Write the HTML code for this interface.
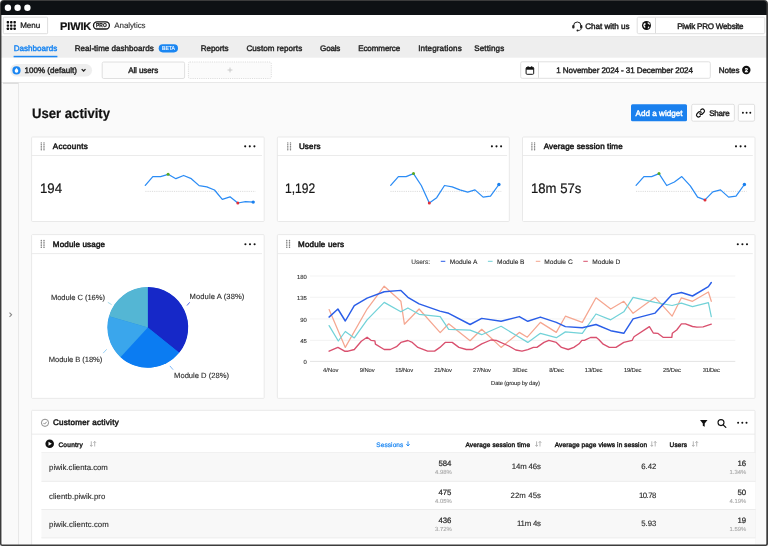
<!DOCTYPE html>
<html lang="en">
<head>
<meta charset="utf-8">
<title>Piwik PRO Analytics - User activity</title>
<style>
html,body{margin:0;padding:0;background:#fff;overflow:hidden;}
body{width:768px;height:546px;position:relative;overflow:hidden;font-family:"Liberation Sans",sans-serif;-webkit-font-smoothing:antialiased;}
.b{position:absolute;display:block;margin:0;padding:0;}
.t{position:absolute;display:block;margin:0;padding:0;white-space:pre;font-weight:400;line-height:20px;text-rendering:geometricPrecision;font-family:"Liberation Sans",sans-serif;}
header,nav,section,aside,main,article{display:contents;}
svg{overflow:visible;}
</style>
</head>
<body>
<div class="b" id="app" style="left:0;top:0;width:768px;height:546px;background:#fafafa;will-change:transform;overflow:hidden;">
<header>
<svg class="b " style="left:-1px;top:13px;" width="770" height="24" viewBox="-1 13 770 24"><rect x="0.00" y="14.50" width="768.00" height="21.50" rx="0.00" fill="#fff"/></svg>
<svg class="b " style="left:2px;top:16px;" width="47" height="19" viewBox="2 16 47 19"><rect x="3.30" y="17.20" width="44.30" height="16.50" rx="0.80" fill="#fff" stroke="#dadada" stroke-width="0.9"/></svg>
<svg class="b" style="left:0px;top:14px;" width="51" height="23" viewBox="0.000 14.000 51 23"><rect x="6.70" y="21.10" width="2.4" height="2.4" rx="0.7" fill="#111"/><rect x="10.05" y="21.10" width="2.4" height="2.4" rx="0.7" fill="#111"/><rect x="13.45" y="21.10" width="2.4" height="2.4" rx="0.7" fill="#111"/><rect x="6.70" y="24.40" width="2.4" height="2.4" rx="0.7" fill="#111"/><rect x="10.05" y="24.40" width="2.4" height="2.4" rx="0.7" fill="#111"/><rect x="13.45" y="24.40" width="2.4" height="2.4" rx="0.7" fill="#111"/><rect x="6.70" y="27.60" width="2.4" height="2.4" rx="0.7" fill="#111"/><rect x="10.05" y="27.60" width="2.4" height="2.4" rx="0.7" fill="#111"/><rect x="13.45" y="27.60" width="2.4" height="2.4" rx="0.7" fill="#111"/></svg>
<span class="t" style="left:20.20px;top:16px;font-size:8.05px;color:#111;-webkit-text-stroke:0.22px currentColor;letter-spacing:-0.046px;">Menu</span>
<span class="t" style="left:60.10px;top:17px;font-size:11px;color:#111;font-weight:700;-webkit-text-stroke:0.2px currentColor;letter-spacing:-0.144px;">PIWIK</span>
<svg class="b" style="left:92px;top:20px;" width="21" height="12" viewBox="0.000 0.000 21 12"><rect x="1.5" y="1.9" width="15.9" height="7.1" rx="3.55" fill="#fff" stroke="#161616" stroke-width="1.3"/><text x="9.45" y="7.25" font-family="Liberation Sans, sans-serif" font-weight="700" font-size="4.9" text-anchor="middle" fill="#161616" stroke="#161616" stroke-width="0.25" letter-spacing="0.15">PRO</text></svg>
<span class="t" style="left:114.30px;top:16px;font-size:8px;color:#333;-webkit-text-stroke:0.12px currentColor;letter-spacing:-0.089px;">Analytics</span>
<svg class="b" style="left:571px;top:20px;" width="14" height="14" viewBox="-0.300 -0.200 14 14"><path d="M2.300 6.300V5.500a3.700 3.700 0 0 1 7.400 0v.8" fill="none" stroke="#222" stroke-width="1"/><rect x="0.9" y="4.900" width="2.300" height="3.500" rx="1" fill="#222"/><rect x="8.800" y="4.900" width="2.300" height="3.500" rx="1" fill="#222"/><path d="M9.900 8c0 1.600-1.200 2.300-3 2.300" fill="none" stroke="#222" stroke-width="0.9"/><circle cx="6.200" cy="10.200" r="1" fill="#222"/></svg>
<span class="t" style="left:585.20px;top:17px;font-size:8.05px;color:#222;-webkit-text-stroke:0.42px currentColor;letter-spacing:0.010px;">Chat with us</span>
<svg class="b " style="left:636px;top:16px;" width="130" height="19" viewBox="636 16 130 19"><rect x="637.20" y="17.20" width="127.60" height="16.50" rx="1.50" fill="#fff" stroke="#dcdcdc" stroke-width="0.9"/></svg>
<svg class="b " style="left:654px;top:16px;" width="3" height="19" viewBox="654 16 3 19"><rect x="655.00" y="17.70" width="1.00" height="15.50" rx="0.00" fill="#dcdcdc"/></svg>
<svg class="b" style="left:641px;top:20px;" width="12" height="12" viewBox="-0.300 -0.300 12 12"><circle cx="5.200" cy="5.200" r="4.500" fill="#111"/><path d="M3.400 2.600c.8.100 1.300.7 1.100 1.300-.2.600-1.100.5-1.300 1.100-.1.600.7.800.9 1.400.1.500-.1.900-.4 1.200-1-.5-1.700-1.500-1.700-2.600 0-.9.500-1.800 1.400-2.400zM6.600 1.900c1.100.3 2 1.200 2.200 2.400-.4.200-.8.100-1.100-.2-.2-.5-.8-.4-1.100-.7-.4-.4-.3-1.100 0-1.500zM7 6.200c.5-.1 1 .2 1.200.6-.3.700-.9 1.300-1.600 1.600-.2-.4-.2-.9 0-1.300.1-.4.100-.8.400-.9z" fill="#fff"/></svg>
<span class="t" style="left:677.20px;top:17px;font-size:8.05px;color:#222;-webkit-text-stroke:0.42px currentColor;letter-spacing:-0.202px;">Piwik PRO Website</span>
</header>
<nav>
<svg class="b " style="left:-1px;top:35px;" width="770" height="24" viewBox="-1 35 770 24"><rect x="0.00" y="36.00" width="768.00" height="21.80" rx="0.00" fill="#eeeeee"/></svg>
<svg class="b " style="left:-1px;top:35px;" width="770" height="3" viewBox="-1 35 770 3"><rect x="0.00" y="36.00" width="768.00" height="0.60" rx="0.00" fill="#e6e6e6"/></svg>
<span class="t" style="left:13.80px;top:39px;font-size:8.05px;color:#1a86f2;-webkit-text-stroke:0.42px currentColor;">Dashboards</span>
<svg class="b " style="left:12px;top:54px;" width="47" height="5" viewBox="12 54 47 5"><rect x="13.60" y="55.80" width="43.80" height="1.60" rx="0.00" fill="#1a86f2"/></svg>
<span class="t" style="left:74.80px;top:39px;font-size:8.05px;color:#262626;-webkit-text-stroke:0.42px currentColor;letter-spacing:0.013px;">Real-time dashboards</span>
<svg class="b " style="left:157px;top:43px;" width="22" height="11" viewBox="157 43 22 11"><rect x="158.70" y="44.30" width="19.30" height="8.10" rx="4.10" fill="#1a86f2"/></svg>
<span class="t" style="left:162.00px;top:39px;font-size:5.8px;color:#fff;-webkit-text-stroke:0.12px currentColor;transform:scaleX(0.8832);transform-origin:0 0;">BETA</span>
<span class="t" style="left:200.80px;top:39px;font-size:8.05px;color:#262626;-webkit-text-stroke:0.42px currentColor;letter-spacing:-0.081px;">Reports</span>
<span class="t" style="left:246.40px;top:39px;font-size:8.05px;color:#262626;-webkit-text-stroke:0.42px currentColor;letter-spacing:0.059px;">Custom reports</span>
<span class="t" style="left:320.10px;top:39px;font-size:8.05px;color:#262626;-webkit-text-stroke:0.42px currentColor;letter-spacing:-0.207px;">Goals</span>
<span class="t" style="left:358.20px;top:39px;font-size:8.05px;color:#262626;-webkit-text-stroke:0.42px currentColor;letter-spacing:-0.106px;">Ecommerce</span>
<span class="t" style="left:418.20px;top:39px;font-size:8.05px;color:#262626;-webkit-text-stroke:0.42px currentColor;letter-spacing:0.130px;">Integrations</span>
<span class="t" style="left:474.30px;top:39px;font-size:8.05px;color:#262626;-webkit-text-stroke:0.42px currentColor;letter-spacing:0.116px;">Settings</span>
</nav>
<section>
<svg class="b " style="left:-1px;top:56px;" width="770" height="27" viewBox="-1 56 770 27"><rect x="0.00" y="57.80" width="768.00" height="24.20" rx="0.00" fill="#fff"/></svg>
<svg class="b " style="left:-1px;top:81px;" width="770" height="3" viewBox="-1 81 770 3"><rect x="0.00" y="82.00" width="768.00" height="0.80" rx="0.00" fill="#e4e4e4"/></svg>
<svg class="b " style="left:9px;top:62px;" width="84" height="16" viewBox="9 62 84 16"><rect x="10.30" y="63.90" width="81.70" height="12.60" rx="6.30" fill="#eeeeee"/></svg>
<svg class="b" style="left:12px;top:66px;" width="10" height="10" viewBox="0.000 0.000 10 10"><circle cx="4.5" cy="4.4" r="4.1" fill="#1a86f2"/><path d="M4.5 1.9c.9 1.100 1.800 2 1.800 3a1.800 1.800 0 0 1-3.600 0c0-1 .9-1.900 1.800-3z" fill="#fff"/></svg>
<span class="t" style="left:24.50px;top:61px;font-size:8.05px;color:#262626;-webkit-text-stroke:0.42px currentColor;letter-spacing:0.011px;">100% (default)</span>
<svg class="b" style="left:80px;top:67px;" width="9" height="8" viewBox="0.000 0.000 9 8"><path d="M1.700 2.100l1.900 1.900 1.900-1.900" fill="none" stroke="#222" stroke-width="1.300"/></svg>
<svg class="b " style="left:101px;top:61px;" width="85" height="19" viewBox="101 61 85 19"><rect x="102.20" y="62.00" width="82.40" height="16.50" rx="1.50" fill="#fcfcfc" stroke="#dcdcdc" stroke-width="0.9"/></svg>
<span class="t" style="left:128.20px;top:61px;font-size:8.05px;color:#262626;-webkit-text-stroke:0.42px currentColor;letter-spacing:-0.109px;">All users</span>
<svg class="b " style="left:187px;top:61px;" width="86" height="19" viewBox="187 61 86 19"><rect x="188.40" y="62.00" width="82.90" height="16.50" rx="1.50" fill="#fbfbfb" stroke="#d8d8d8" stroke-width="0.9" stroke-dasharray="1.1 1.1"/></svg>
<svg class="b" style="left:227px;top:67px;" width="7" height="7" viewBox="0.000 0.000 7 7"><path d="M3 .6v4.800M.6 3h4.800" stroke="#c4c4c4" stroke-width="0.9"/></svg>
<svg class="b " style="left:519px;top:60px;" width="193" height="20" viewBox="519 60 193 20"><rect x="520.70" y="61.80" width="189.60" height="16.50" rx="1.50" fill="#fff" stroke="#dcdcdc" stroke-width="0.9"/></svg>
<svg class="b " style="left:537px;top:61px;" width="3" height="18" viewBox="537 61 3 18"><rect x="538.00" y="62.30" width="1.00" height="15.50" rx="0.00" fill="#dcdcdc"/></svg>
<svg class="b" style="left:525px;top:65px;" width="11" height="12" viewBox="0.000 -0.500 11 12"><rect x="1.1" y="1.900" width="7.600" height="6.900" rx="1" fill="none" stroke="#111" stroke-width="1"/><rect x="1.1" y="1.900" width="7.600" height="2.300" fill="#111"/><path d="M3.100.7v1.800M6.700.7v1.800" stroke="#111" stroke-width="1"/></svg>
<span class="t" style="left:556.30px;top:61px;font-size:8.05px;color:#262626;-webkit-text-stroke:0.42px currentColor;letter-spacing:-0.088px;">1 November 2024 - 31 December 2024</span>
<span class="t" style="left:718.80px;top:61px;font-size:8.05px;color:#262626;-webkit-text-stroke:0.42px currentColor;letter-spacing:-0.082px;">Notes</span>
<svg class="b " style="left:741px;top:64px;" width="11" height="12" viewBox="741 64 11 12"><rect x="742.10" y="65.80" width="8.40" height="8.40" rx="4.20" fill="#111"/></svg>
<span class="t" style="left:744.74px;top:61px;font-size:5.6px;color:#fff;-webkit-text-stroke:0.42px currentColor;">2</span>
</section>
<aside>
<svg class="b " style="left:-1px;top:81px;" width="21" height="466" viewBox="-1 81 21 466"><rect x="0.00" y="82.80" width="18.20" height="463.20" rx="0.00" fill="#fafafa"/></svg>
<svg class="b " style="left:-1px;top:81px;" width="5" height="466" viewBox="-1 81 5 466"><rect x="0.00" y="82.80" width="3.00" height="463.20" rx="0.00" fill="#fdfdfd"/></svg>
<svg class="b " style="left:17px;top:81px;" width="3" height="466" viewBox="17 81 3 466"><rect x="18.00" y="82.80" width="0.80" height="463.20" rx="0.00" fill="#e4e4e4"/></svg>
<svg class="b " style="left:2px;top:81px;" width="18" height="4" viewBox="2 81 18 4"><rect x="3.00" y="82.30" width="15.40" height="1.70" rx="0.00" fill="#dedede"/></svg>
<svg class="b" style="left:8px;top:311px;" width="7" height="9" viewBox="0.000 0.000 7 9"><path d="M1.500 1.700l2.100 2.100-2.100 2.100" fill="none" stroke="#868686" stroke-width="1.050"/></svg>
</aside>
<main>
<h1 class="t" style="left:31.80px;top:104px;font-size:13.8px;color:#121212;font-weight:700;-webkit-text-stroke:0.2px currentColor;transform:scaleX(0.9503);transform-origin:0 0;">User activity</h1>
<svg class="b " style="left:630px;top:103px;" width="58" height="20" viewBox="630 103 58 20"><rect x="631.00" y="104.30" width="56.00" height="16.90" rx="1.50" fill="#1a80ee"/></svg>
<span class="t" style="left:635.50px;top:104px;font-size:8.05px;color:#fff;-webkit-text-stroke:0.42px currentColor;letter-spacing:0.051px;">Add a widget</span>
<svg class="b " style="left:690px;top:103px;" width="46" height="20" viewBox="690 103 46 20"><rect x="691.70" y="104.30" width="42.70" height="16.90" rx="1.50" fill="#fff" stroke="#dcdcdc" stroke-width="0.9"/></svg>
<svg class="b" style="left:695px;top:108px;" width="12" height="11" viewBox="-0.500 0.000 12 11"><g fill="none" stroke="#111" stroke-width="1.200" stroke-linecap="round"><path d="M4.300 5.700a2 2 0 0 0 2.800 0l1.500-1.500a2 2 0 0 0-2.800-2.800l-.7.700"/><path d="M5.700 4.300a2 2 0 0 0-2.800 0l-1.500 1.500a2 2 0 0 0 2.800 2.800l.7-.7"/></g></svg>
<span class="t" style="left:709.20px;top:104px;font-size:8.05px;color:#262626;-webkit-text-stroke:0.42px currentColor;letter-spacing:-0.221px;">Share</span>
<svg class="b " style="left:737px;top:103px;" width="19" height="20" viewBox="737 103 19 20"><rect x="738.30" y="104.30" width="16.30" height="16.90" rx="1.50" fill="#fff" stroke="#dcdcdc" stroke-width="0.9"/></svg>
<svg class="b" style="left:738px;top:109px;" width="18" height="8" viewBox="738.000 109.000 18 8"><circle cx="742.90" cy="112.80" r="0.95" fill="#111"/><circle cx="746.60" cy="112.80" r="0.95" fill="#111"/><circle cx="750.30" cy="112.80" r="0.95" fill="#111"/></svg>
<article>
<svg class="b " style="left:30px;top:136px;" width="236" height="87" viewBox="30 136 236 87"><rect x="31.60" y="137.00" width="232.60" height="84.50" rx="1.00" fill="#fff" stroke="#e6e6e6" stroke-width="0.9"/></svg>
<svg class="b " style="left:30px;top:154px;" width="233" height="3" viewBox="30 154 233 3"><rect x="31.60" y="155.10" width="230.40" height="0.80" rx="0.00" fill="#e6e6e6"/></svg>
<svg class="b" style="left:40px;top:142px;" width="7" height="11" viewBox="-0.600 -0.200 7 11"><circle cx="0.70" cy="0.70" r="0.72" fill="#7c7c7c"/><circle cx="3.40" cy="0.70" r="0.72" fill="#7c7c7c"/><circle cx="0.70" cy="2.42" r="0.72" fill="#7c7c7c"/><circle cx="3.40" cy="2.42" r="0.72" fill="#7c7c7c"/><circle cx="0.70" cy="4.14" r="0.72" fill="#7c7c7c"/><circle cx="3.40" cy="4.14" r="0.72" fill="#7c7c7c"/><circle cx="0.70" cy="5.86" r="0.72" fill="#7c7c7c"/><circle cx="3.40" cy="5.86" r="0.72" fill="#7c7c7c"/><circle cx="0.70" cy="7.58" r="0.72" fill="#7c7c7c"/><circle cx="3.40" cy="7.58" r="0.72" fill="#7c7c7c"/></svg>
<h2 class="t" style="left:52.80px;top:137px;font-size:8.05px;color:#1a1a1a;-webkit-text-stroke:0.5px currentColor;letter-spacing:0.270px;">Accounts</h2>
<svg class="b" style="left:241px;top:143px;" width="18" height="8" viewBox="241.000 143.000 18 8"><circle cx="245.20" cy="146.35" r="1.05" fill="#111"/><circle cx="249.80" cy="146.35" r="1.05" fill="#111"/><circle cx="254.40" cy="146.35" r="1.05" fill="#111"/></svg>
<span class="t" style="left:40.20px;top:179px;font-size:13.8px;color:#161616;-webkit-text-stroke:0.22px currentColor;transform:scaleX(0.9598);transform-origin:0 0;">194</span>
<svg class="b" style="left:0px;top:160px;" width="769" height="61" viewBox="0.000 160.000 769 61"><path d="M145.3 191.400H255.6" stroke="#cfcfcf" stroke-width="0.7" stroke-dasharray="1.200 1"/><path d="M145.3 185.4 L152.8 176.6 L160.6 176.6 L168.1 174.3 L175.9 178.7 L183.6 175.5 L191.3 178.7 L199.1 185.6 L206.8 186.8 L214.5 190.0 L222.3 199.3 L230.0 196.8 L237.8 203.0 L245.5 201.7 L253.2 202.1" fill="none" stroke="#2b8cf5" stroke-width="1.250" stroke-linejoin="round" stroke-linecap="round"/><circle cx="168.1" cy="174.3" r="1.500" fill="#5aa81e"/><circle cx="237.8" cy="203" r="1.500" fill="#e0303a"/><circle cx="253.2" cy="202.1" r="1.700" fill="#1a80ee"/></svg>
</article>
<article>
<svg class="b " style="left:276px;top:136px;" width="235" height="87" viewBox="276 136 235 87"><rect x="277.40" y="137.00" width="231.90" height="84.50" rx="1.00" fill="#fff" stroke="#e6e6e6" stroke-width="0.9"/></svg>
<svg class="b " style="left:276px;top:154px;" width="233" height="3" viewBox="276 154 233 3"><rect x="277.40" y="155.10" width="229.70" height="0.80" rx="0.00" fill="#e6e6e6"/></svg>
<svg class="b" style="left:287px;top:142px;" width="6" height="11" viewBox="-0.100 -0.200 6 11"><circle cx="0.70" cy="0.70" r="0.72" fill="#7c7c7c"/><circle cx="3.40" cy="0.70" r="0.72" fill="#7c7c7c"/><circle cx="0.70" cy="2.42" r="0.72" fill="#7c7c7c"/><circle cx="3.40" cy="2.42" r="0.72" fill="#7c7c7c"/><circle cx="0.70" cy="4.14" r="0.72" fill="#7c7c7c"/><circle cx="3.40" cy="4.14" r="0.72" fill="#7c7c7c"/><circle cx="0.70" cy="5.86" r="0.72" fill="#7c7c7c"/><circle cx="3.40" cy="5.86" r="0.72" fill="#7c7c7c"/><circle cx="0.70" cy="7.58" r="0.72" fill="#7c7c7c"/><circle cx="3.40" cy="7.58" r="0.72" fill="#7c7c7c"/></svg>
<h2 class="t" style="left:298.90px;top:137px;font-size:8.05px;color:#1a1a1a;-webkit-text-stroke:0.5px currentColor;letter-spacing:0.170px;">Users</h2>
<svg class="b" style="left:488px;top:143px;" width="18" height="8" viewBox="488.000 143.000 18 8"><circle cx="491.90" cy="146.35" r="1.05" fill="#111"/><circle cx="496.50" cy="146.35" r="1.05" fill="#111"/><circle cx="501.10" cy="146.35" r="1.05" fill="#111"/></svg>
<span class="t" style="left:285.30px;top:179px;font-size:13.8px;color:#161616;-webkit-text-stroke:0.22px currentColor;transform:scaleX(0.8745);transform-origin:0 0;">1,192</span>
<svg class="b" style="left:0px;top:160px;" width="769" height="61" viewBox="0.000 160.000 769 61"><path d="M390.4 191.400H501.3" stroke="#cfcfcf" stroke-width="0.7" stroke-dasharray="1.200 1"/><path d="M390.7 185.4 L398.4 176.6 L406.1 176.6 L413.5 173.6 L421.3 185.5 L429.3 203.0 L436.7 197.7 L444.5 185.5 L452.2 186.8 L459.9 189.8 L467.7 192.2 L475.0 189.9 L483.1 197.1 L490.5 196.1 L498.9 184.5" fill="none" stroke="#2b8cf5" stroke-width="1.250" stroke-linejoin="round" stroke-linecap="round"/><circle cx="413.5" cy="173.6" r="1.500" fill="#5aa81e"/><circle cx="429.3" cy="203" r="1.500" fill="#e0303a"/><circle cx="498.9" cy="184.5" r="1.700" fill="#1a80ee"/></svg>
</article>
<article>
<svg class="b " style="left:521px;top:136px;" width="235" height="87" viewBox="521 136 235 87"><rect x="522.50" y="137.00" width="232.50" height="84.50" rx="1.00" fill="#fff" stroke="#e6e6e6" stroke-width="0.9"/></svg>
<svg class="b " style="left:521px;top:154px;" width="233" height="3" viewBox="521 154 233 3"><rect x="522.50" y="155.10" width="230.30" height="0.80" rx="0.00" fill="#e6e6e6"/></svg>
<svg class="b" style="left:531px;top:142px;" width="6" height="11" viewBox="-0.200 -0.200 6 11"><circle cx="0.70" cy="0.70" r="0.72" fill="#7c7c7c"/><circle cx="3.40" cy="0.70" r="0.72" fill="#7c7c7c"/><circle cx="0.70" cy="2.42" r="0.72" fill="#7c7c7c"/><circle cx="3.40" cy="2.42" r="0.72" fill="#7c7c7c"/><circle cx="0.70" cy="4.14" r="0.72" fill="#7c7c7c"/><circle cx="3.40" cy="4.14" r="0.72" fill="#7c7c7c"/><circle cx="0.70" cy="5.86" r="0.72" fill="#7c7c7c"/><circle cx="3.40" cy="5.86" r="0.72" fill="#7c7c7c"/><circle cx="0.70" cy="7.58" r="0.72" fill="#7c7c7c"/><circle cx="3.40" cy="7.58" r="0.72" fill="#7c7c7c"/></svg>
<h2 class="t" style="left:543.70px;top:137px;font-size:8.05px;color:#1a1a1a;-webkit-text-stroke:0.5px currentColor;letter-spacing:0.115px;">Average session time</h2>
<svg class="b" style="left:732px;top:143px;" width="18" height="8" viewBox="732.000 143.000 18 8"><circle cx="736.00" cy="146.35" r="1.05" fill="#111"/><circle cx="740.60" cy="146.35" r="1.05" fill="#111"/><circle cx="745.20" cy="146.35" r="1.05" fill="#111"/></svg>
<span class="t" style="left:530.90px;top:179px;font-size:13.8px;color:#161616;-webkit-text-stroke:0.22px currentColor;transform:scaleX(0.9522);transform-origin:0 0;">18m 57s</span>
<svg class="b" style="left:0px;top:160px;" width="769" height="61" viewBox="0.000 160.000 769 61"><path d="M636 191.400H746.6" stroke="#cfcfcf" stroke-width="0.7" stroke-dasharray="1.200 1"/><path d="M636.1 185.4 L643.9 176.6 L651.6 176.6 L659.0 173.6 L666.7 185.5 L674.4 182.0 L681.8 176.6 L690.3 185.9 L697.6 197.1 L705.0 199.9 L712.8 191.9 L720.5 189.9 L728.6 197.1 L736.0 196.1 L744.4 184.5" fill="none" stroke="#2b8cf5" stroke-width="1.250" stroke-linejoin="round" stroke-linecap="round"/><circle cx="659" cy="173.6" r="1.500" fill="#5aa81e"/><circle cx="705" cy="199.9" r="1.500" fill="#e0303a"/><circle cx="744.4" cy="184.5" r="1.700" fill="#1a80ee"/></svg>
</article>
<article>
<svg class="b " style="left:30px;top:233px;" width="236" height="167" viewBox="30 233 236 167"><rect x="31.60" y="234.60" width="232.60" height="163.80" rx="1.00" fill="#fff" stroke="#e6e6e6" stroke-width="0.9"/></svg>
<svg class="b " style="left:30px;top:252px;" width="233" height="4" viewBox="30 252 233 4"><rect x="31.60" y="253.30" width="230.40" height="0.80" rx="0.00" fill="#e6e6e6"/></svg>
<svg class="b" style="left:40px;top:239px;" width="7" height="12" viewBox="-0.600 -0.800 7 12"><circle cx="0.70" cy="0.70" r="0.72" fill="#7c7c7c"/><circle cx="3.40" cy="0.70" r="0.72" fill="#7c7c7c"/><circle cx="0.70" cy="2.42" r="0.72" fill="#7c7c7c"/><circle cx="3.40" cy="2.42" r="0.72" fill="#7c7c7c"/><circle cx="0.70" cy="4.14" r="0.72" fill="#7c7c7c"/><circle cx="3.40" cy="4.14" r="0.72" fill="#7c7c7c"/><circle cx="0.70" cy="5.86" r="0.72" fill="#7c7c7c"/><circle cx="3.40" cy="5.86" r="0.72" fill="#7c7c7c"/><circle cx="0.70" cy="7.58" r="0.72" fill="#7c7c7c"/><circle cx="3.40" cy="7.58" r="0.72" fill="#7c7c7c"/></svg>
<h2 class="t" style="left:52.80px;top:235px;font-size:8.05px;color:#1a1a1a;-webkit-text-stroke:0.5px currentColor;letter-spacing:0.148px;">Module usage</h2>
<svg class="b" style="left:242px;top:241px;" width="17" height="8" viewBox="242.000 241.000 17 8"><circle cx="245.40" cy="244.25" r="1.05" fill="#111"/><circle cx="250.00" cy="244.25" r="1.05" fill="#111"/><circle cx="254.60" cy="244.25" r="1.05" fill="#111"/></svg>
<svg class="b" style="left:0px;top:280px;" width="301" height="101" viewBox="0.000 280.000 301 101"><circle cx="147.8" cy="327.4" r="40.1" fill="#0b7cf2"/><path d="M147.8 327.4L147.80 287.00A40.4 40.4 0 0 1 179.20 352.82Z" fill="#1628c8"/><path d="M147.8 327.4L179.20 352.82A40.4 40.4 0 0 1 120.45 357.14Z" fill="#0b7cf2"/><path d="M147.8 327.4L120.45 357.14A40.4 40.4 0 0 1 108.95 316.33Z" fill="#3aa6ec"/><path d="M147.8 327.4L108.95 316.33A40.4 40.4 0 0 1 147.80 287.00Z" fill="#54b6d4"/><path d="M187 305.500L189.700 302.300" stroke="#4a5fe0" stroke-width="0.9"/><path d="M107.800 302.300L111.600 304.600" stroke="#7cc8e0" stroke-width="0.7"/><path d="M103.200 353.100L106.700 349.300" stroke="#6cbcf0" stroke-width="0.7"/><path d="M169.900 365.900L173.100 369.700" stroke="#4a9cf5" stroke-width="0.7"/></svg>
<span class="t" style="left:50.90px;top:288px;font-size:7.6px;color:#2c2c2c;-webkit-text-stroke:0.12px currentColor;letter-spacing:-0.062px;">Module C (16%)</span>
<span class="t" style="left:189.50px;top:287px;font-size:7.6px;color:#2c2c2c;-webkit-text-stroke:0.12px currentColor;letter-spacing:0.096px;">Module A (38%)</span>
<span class="t" style="left:48.80px;top:350px;font-size:7.6px;color:#2c2c2c;-webkit-text-stroke:0.12px currentColor;letter-spacing:-0.076px;">Module B (18%)</span>
<span class="t" style="left:174.10px;top:366px;font-size:7.6px;color:#2c2c2c;-webkit-text-stroke:0.12px currentColor;">Module D (28%)</span>
</article>
<article>
<svg class="b " style="left:276px;top:233px;" width="480" height="167" viewBox="276 233 480 167"><rect x="277.40" y="234.60" width="477.60" height="163.80" rx="1.00" fill="#fff" stroke="#e6e6e6" stroke-width="0.9"/></svg>
<svg class="b " style="left:276px;top:252px;" width="478" height="4" viewBox="276 252 478 4"><rect x="277.40" y="253.30" width="475.40" height="0.80" rx="0.00" fill="#e6e6e6"/></svg>
<svg class="b" style="left:286px;top:239px;" width="6" height="12" viewBox="-0.100 -0.800 6 12"><circle cx="0.70" cy="0.70" r="0.72" fill="#7c7c7c"/><circle cx="3.40" cy="0.70" r="0.72" fill="#7c7c7c"/><circle cx="0.70" cy="2.42" r="0.72" fill="#7c7c7c"/><circle cx="3.40" cy="2.42" r="0.72" fill="#7c7c7c"/><circle cx="0.70" cy="4.14" r="0.72" fill="#7c7c7c"/><circle cx="3.40" cy="4.14" r="0.72" fill="#7c7c7c"/><circle cx="0.70" cy="5.86" r="0.72" fill="#7c7c7c"/><circle cx="3.40" cy="5.86" r="0.72" fill="#7c7c7c"/><circle cx="0.70" cy="7.58" r="0.72" fill="#7c7c7c"/><circle cx="3.40" cy="7.58" r="0.72" fill="#7c7c7c"/></svg>
<h2 class="t" style="left:298.10px;top:235px;font-size:8.05px;color:#1a1a1a;-webkit-text-stroke:0.5px currentColor;letter-spacing:0.170px;">Module uers</h2>
<svg class="b" style="left:734px;top:241px;" width="18" height="8" viewBox="734.000 241.000 18 8"><circle cx="737.80" cy="244.25" r="1.05" fill="#111"/><circle cx="742.40" cy="244.25" r="1.05" fill="#111"/><circle cx="747.00" cy="244.25" r="1.05" fill="#111"/></svg>
<svg class="b" style="left:0px;top:255px;" width="769" height="111" viewBox="0.000 255.000 769 111"><path d="M310 276.0H735.300" stroke="#f0f0f0" stroke-width="0.8"/><path d="M310 297.3H735.300" stroke="#f0f0f0" stroke-width="0.8"/><path d="M310 318.9H735.300" stroke="#f0f0f0" stroke-width="0.8"/><path d="M310 340.4H735.300" stroke="#f0f0f0" stroke-width="0.8"/><path d="M310 361.400H735.300" stroke="#dcdcdc" stroke-width="0.8"/><path d="M329.1 309.6 L345.3 347.4 L367.1 309.0 L384.2 286.2 L400.9 301.3 L404.4 324.2 L419.1 309.0 L440.2 332.6 L448.7 323.8 L470.1 340.7 L481.7 329.3 L501.1 347.4 L519.3 332.4 L527.3 337.2 L540.4 322.4 L556.3 332.4 L565.4 316.2 L582.3 322.4 L596.0 297.8 L610.7 309.0 L623.8 301.3 L633.1 313.3 L655.1 297.3 L672.1 316.2 L681.4 297.8 L692.5 301.3 L708.4 292.0 L711.3 301.3" fill="none" stroke="#f5a690" stroke-width="1.25" stroke-linejoin="round" stroke-linecap="round"/><path d="M329.1 325.6 L338.3 341.0 L345.3 331.5 L354.3 337.9 L367.1 319.9 L384.2 302.4 L400.9 311.8 L407.9 308.0 L419.1 314.3 L440.2 316.6 L448.7 329.4 L470.1 330.1 L481.7 334.7 L501.1 326.3 L519.3 337.2 L527.8 342.4 L540.4 333.3 L556.3 337.7 L565.4 331.9 L582.3 333.3 L596.0 314.0 L610.7 319.8 L623.8 311.8 L633.1 297.4 L655.1 302.4 L672.1 305.5 L681.4 303.1 L692.5 306.6 L708.4 302.7 L711.3 316.6" fill="none" stroke="#72d2d8" stroke-width="1.25" stroke-linejoin="round" stroke-linecap="round"/><path d="M329.1 351.2 L337.9 347.4 L344.6 351.2 L348.1 351.2 L354.3 349.5 L361.3 341.2 L367.1 337.3 L371.0 340.3 L374.9 340.9 L375.4 344.2 L384.2 349.5 L390.3 349.5 L396.5 346.7 L400.9 342.4 L407.9 340.5 L412.3 342.4 L417.9 347.4 L427.6 351.1 L434.6 351.1 L439.9 347.4 L445.2 342.4 L452.2 342.4 L458.9 347.4 L466.3 349.5 L472.4 349.5 L481.7 343.8 L490.9 340.0 L496.2 340.3 L508.8 346.0 L515.8 350.0 L522.0 351.2 L527.8 349.6 L533.4 347.4 L536.9 347.4 L544.0 342.4 L548.9 340.3 L556.3 342.4 L561.5 347.4 L568.2 349.5 L573.8 347.4 L579.1 343.8 L581.9 340.3 L584.4 340.3 L590.5 337.5 L596.0 337.3 L598.8 339.5 L603.2 344.2 L609.3 347.4 L616.0 347.4 L623.8 342.4 L632.2 340.3 L634.0 336.8 L649.4 326.6 L653.3 333.0 L657.7 333.3 L663.0 337.3 L671.8 337.3 L672.3 333.3 L676.7 330.0 L681.4 323.9 L685.5 323.8 L692.5 326.5 L696.9 327.2 L703.1 326.8 L711.3 324.2" fill="none" stroke="#d9506e" stroke-width="1.35" stroke-linejoin="round" stroke-linecap="round"/><path d="M329.1 317.1 L337.9 309.0 L345.3 321.0 L354.3 305.7 L367.1 298.1 L384.2 291.8 L400.9 290.4 L407.9 297.3 L419.1 303.9 L439.9 311.1 L448.7 313.3 L470.1 324.5 L481.7 318.4 L501.1 321.2 L519.3 316.6 L527.8 321.3 L540.4 317.1 L556.3 322.4 L565.4 326.6 L582.3 327.7 L596.0 324.5 L610.7 330.7 L623.8 333.3 L633.1 318.9 L655.1 313.1 L672.1 294.6 L681.4 292.5 L692.5 296.0 L708.4 286.7 L711.3 282.5" fill="none" stroke="#2a5ee8" stroke-width="1.45" stroke-linejoin="round" stroke-linecap="round"/><path d="M440.800 261.300H445.300" stroke="#2a5ce8" stroke-width="1"/><path d="M487.900 261.300H492.600" stroke="#6fd0d6" stroke-width="1"/><path d="M535.800 261.300H540.300" stroke="#f4a48c" stroke-width="1"/><path d="M583.300 261.300H587.800" stroke="#d8506c" stroke-width="1"/></svg>
<span class="t" style="left:411.20px;top:253px;font-size:6.6px;color:#444;-webkit-text-stroke:0.12px currentColor;letter-spacing:-0.014px;">Users:</span>
<span class="t" style="left:449.80px;top:253px;font-size:6.6px;color:#303030;-webkit-text-stroke:0.12px currentColor;">Module A</span>
<span class="t" style="left:497.10px;top:253px;font-size:6.6px;color:#303030;-webkit-text-stroke:0.12px currentColor;letter-spacing:-0.069px;">Module B</span>
<span class="t" style="left:544.30px;top:253px;font-size:6.6px;color:#303030;-webkit-text-stroke:0.12px currentColor;letter-spacing:0.022px;">Module C</span>
<span class="t" style="left:592.30px;top:253px;font-size:6.6px;color:#303030;-webkit-text-stroke:0.12px currentColor;letter-spacing:-0.035px;">Module D</span>
<span class="t" style="left:297.06px;top:268px;font-size:5.9px;color:#333;-webkit-text-stroke:0.12px currentColor;">180</span>
<span class="t" style="left:297.06px;top:289px;font-size:5.9px;color:#333;-webkit-text-stroke:0.12px currentColor;">135</span>
<span class="t" style="left:300.34px;top:311px;font-size:5.9px;color:#333;-webkit-text-stroke:0.12px currentColor;">90</span>
<span class="t" style="left:300.34px;top:332px;font-size:5.9px;color:#333;-webkit-text-stroke:0.12px currentColor;">45</span>
<span class="t" style="left:303.62px;top:353px;font-size:5.9px;color:#333;-webkit-text-stroke:0.12px currentColor;">0</span>
<span class="t" style="left:323.05px;top:361px;font-size:5.8px;color:#303030;-webkit-text-stroke:0.12px currentColor;letter-spacing:0.037px;">4/Nov</span>
<span class="t" style="left:359.65px;top:361px;font-size:5.8px;color:#303030;-webkit-text-stroke:0.12px currentColor;letter-spacing:-0.013px;">9/Nov</span>
<span class="t" style="left:395.35px;top:361px;font-size:5.8px;color:#303030;-webkit-text-stroke:0.12px currentColor;letter-spacing:-0.135px;">15/Nov</span>
<span class="t" style="left:434.15px;top:361px;font-size:5.8px;color:#303030;-webkit-text-stroke:0.12px currentColor;letter-spacing:-0.135px;">21/Nov</span>
<span class="t" style="left:473.00px;top:361px;font-size:5.8px;color:#303030;-webkit-text-stroke:0.12px currentColor;letter-spacing:-0.075px;">27/Nov</span>
<span class="t" style="left:512.50px;top:361px;font-size:5.8px;color:#303030;-webkit-text-stroke:0.12px currentColor;letter-spacing:-0.038px;">3/Dec</span>
<span class="t" style="left:549.15px;top:361px;font-size:5.8px;color:#303030;-webkit-text-stroke:0.12px currentColor;letter-spacing:-0.113px;">8/Dec</span>
<span class="t" style="left:584.85px;top:361px;font-size:5.8px;color:#303030;-webkit-text-stroke:0.12px currentColor;letter-spacing:-0.175px;">13/Dec</span>
<span class="t" style="left:624.05px;top:361px;font-size:5.8px;color:#303030;-webkit-text-stroke:0.12px currentColor;letter-spacing:-0.215px;">19/Dec</span>
<span class="t" style="left:663.00px;top:361px;font-size:5.8px;color:#303030;-webkit-text-stroke:0.12px currentColor;letter-spacing:-0.075px;">25/Dec</span>
<span class="t" style="left:702.65px;top:361px;font-size:5.8px;color:#303030;-webkit-text-stroke:0.12px currentColor;letter-spacing:-0.215px;">31/Dec</span>
<span class="t" style="left:491.10px;top:374px;font-size:5.8px;color:#303030;-webkit-text-stroke:0.12px currentColor;letter-spacing:-0.131px;">Date (group by day)</span>
</article>
<article>
<svg class="b " style="left:30px;top:409px;" width="726" height="152" viewBox="30 409 726 152"><rect x="31.60" y="410.30" width="723.40" height="149.70" rx="1.00" fill="#fff" stroke="#e6e6e6" stroke-width="0.9"/></svg>
<svg class="b" style="left:40px;top:418px;" width="11" height="11" viewBox="-0.500 -0.300 11 11"><circle cx="4.500" cy="4.500" r="3.600" fill="none" stroke="#858585" stroke-width="0.95"/><path d="M2.900 4.600l1.200 1.200 2.100-2.300" fill="none" stroke="#858585" stroke-width="0.95"/></svg>
<h2 class="t" style="left:52.90px;top:413px;font-size:8.05px;color:#1a1a1a;-webkit-text-stroke:0.5px currentColor;letter-spacing:0.254px;">Customer activity</h2>
<svg class="b" style="left:699px;top:418px;" width="31" height="11" viewBox="0.000 0.000 31 11"><path d="M1 2h7.500L5.700 5.400v3.300l-1.900-.9V5.400z" fill="#111"/><circle cx="22" cy="4.600" r="3" fill="none" stroke="#111" stroke-width="1.100"/><path d="M24.200 6.900l2.600 2.500" stroke="#111" stroke-width="1.300" stroke-linecap="round"/></svg>
<svg class="b" style="left:734px;top:419px;" width="18" height="8" viewBox="734.000 419.000 18 8"><circle cx="738.10" cy="422.80" r="1.0" fill="#111"/><circle cx="742.30" cy="422.80" r="1.0" fill="#111"/><circle cx="746.50" cy="422.80" r="1.0" fill="#111"/></svg>
<svg class="b " style="left:30px;top:432px;" width="726" height="4" viewBox="30 432 726 4"><rect x="31.60" y="433.70" width="723.40" height="0.80" rx="0.00" fill="#e6e6e6"/></svg>
<svg class="b" style="left:45px;top:439px;" width="11" height="11" viewBox="0.000 0.000 11 11"><circle cx="4.700" cy="4.700" r="4.300" fill="#111"/><path d="M3.500 2.700l3.300 2-3.300 2z" fill="#fff"/></svg>
<span class="t" style="left:58.40px;top:436px;font-size:6.5px;color:#1a1a1a;-webkit-text-stroke:0.42px currentColor;letter-spacing:0.273px;">Country</span>
<svg class="b" style="left:89px;top:440px;" width="10" height="9" viewBox="-0.500 -0.500 10 9"><g fill="none" stroke="#9a9a9a" stroke-width="0.7"><path d="M1.800.8v5M.5 4.500l1.300 1.400 1.300-1.400"/><path d="M5.200 6V1M3.900 2.300L5.200.9l1.300 1.400"/></g></svg>
<span class="t" style="left:376.30px;top:436px;font-size:6.5px;color:#1a86f2;-webkit-text-stroke:0.22px currentColor;letter-spacing:0.089px;">Sessions</span>
<svg class="b" style="left:405px;top:440px;" width="7" height="9" viewBox="-0.500 -0.500 7 9"><path d="M2.500.8v4.600M.8 3.700l1.700 1.800 1.700-1.800" fill="none" stroke="#1a86f2" stroke-width="0.9"/></svg>
<span class="t" style="left:465.40px;top:436px;font-size:6.5px;color:#1a1a1a;-webkit-text-stroke:0.42px currentColor;letter-spacing:0.136px;">Average session time</span>
<svg class="b" style="left:534px;top:440px;" width="10" height="9" viewBox="-0.800 -0.500 10 9"><g fill="none" stroke="#9a9a9a" stroke-width="0.7"><path d="M1.800.8v5M.5 4.500l1.300 1.400 1.300-1.400"/><path d="M5.200 6V1M3.900 2.300L5.200.9l1.300 1.400"/></g></svg>
<span class="t" style="left:554.80px;top:436px;font-size:6.5px;color:#1a1a1a;-webkit-text-stroke:0.42px currentColor;letter-spacing:0.110px;">Average page views in session</span>
<svg class="b" style="left:650px;top:440px;" width="9" height="9" viewBox="0.000 -0.500 9 9"><g fill="none" stroke="#9a9a9a" stroke-width="0.7"><path d="M1.800.8v5M.5 4.500l1.300 1.400 1.300-1.400"/><path d="M5.200 6V1M3.900 2.300L5.200.9l1.300 1.400"/></g></svg>
<span class="t" style="left:669.60px;top:436px;font-size:6.5px;color:#1a1a1a;-webkit-text-stroke:0.42px currentColor;letter-spacing:0.106px;">Users</span>
<svg class="b" style="left:691px;top:440px;" width="10" height="9" viewBox="-0.500 -0.500 10 9"><g fill="none" stroke="#9a9a9a" stroke-width="0.7"><path d="M1.800.8v5M.5 4.500l1.300 1.400 1.300-1.400"/><path d="M5.200 6V1M3.900 2.300L5.200.9l1.300 1.400"/></g></svg>
<svg class="b " style="left:40px;top:451px;" width="717" height="32" viewBox="40 451 717 32"><rect x="41.40" y="452.60" width="714.10" height="28.70" rx="0.00" fill="#f8f8f8"/></svg>
<svg class="b " style="left:40px;top:451px;" width="717" height="3" viewBox="40 451 717 3"><rect x="41.40" y="452.20" width="714.10" height="0.80" rx="0.00" fill="#eeeeee"/></svg>
<span class="t" style="left:49.10px;top:458px;font-size:7.8px;color:#2a2a2a;-webkit-text-stroke:0.12px currentColor;letter-spacing:-0.010px;">piwik.clienta.com</span>
<span class="t" style="left:438.39px;top:454px;font-size:7.8px;color:#2a2a2a;-webkit-text-stroke:0.22px currentColor;">584</span>
<span class="t" style="left:434.97px;top:463px;font-size:5.9px;color:#a8a8a8;-webkit-text-stroke:0.12px currentColor;">4.98%</span>
<span class="t" style="left:511.70px;top:457px;font-size:7.8px;color:#2a2a2a;-webkit-text-stroke:0.12px currentColor;letter-spacing:-0.103px;">14m 46s</span>
<span class="t" style="left:641.20px;top:457px;font-size:7.8px;color:#2a2a2a;-webkit-text-stroke:0.12px currentColor;letter-spacing:0.006px;">6.42</span>
<span class="t" style="left:737.42px;top:454px;font-size:7.8px;color:#2a2a2a;-webkit-text-stroke:0.22px currentColor;">16</span>
<span class="t" style="left:729.57px;top:463px;font-size:5.9px;color:#a8a8a8;-webkit-text-stroke:0.12px currentColor;">1.34%</span>
<svg class="b " style="left:40px;top:480px;" width="717" height="31" viewBox="40 480 717 31"><rect x="41.40" y="481.30" width="714.10" height="28.10" rx="0.00" fill="#fff"/></svg>
<svg class="b " style="left:40px;top:479px;" width="717" height="4" viewBox="40 479 717 4"><rect x="41.40" y="480.90" width="714.10" height="0.80" rx="0.00" fill="#e9e9e9"/></svg>
<span class="t" style="left:49.10px;top:487px;font-size:7.8px;color:#2a2a2a;-webkit-text-stroke:0.12px currentColor;letter-spacing:0.044px;">clientb.piwik.pro</span>
<span class="t" style="left:438.39px;top:483px;font-size:7.8px;color:#2a2a2a;-webkit-text-stroke:0.22px currentColor;">475</span>
<span class="t" style="left:434.97px;top:492px;font-size:5.9px;color:#a8a8a8;-webkit-text-stroke:0.12px currentColor;">4.05%</span>
<span class="t" style="left:510.50px;top:486px;font-size:7.8px;color:#2a2a2a;-webkit-text-stroke:0.12px currentColor;letter-spacing:0.097px;">22m 45s</span>
<span class="t" style="left:639.00px;top:486px;font-size:7.8px;color:#2a2a2a;-webkit-text-stroke:0.12px currentColor;letter-spacing:-0.530px;">10.78</span>
<span class="t" style="left:737.42px;top:483px;font-size:7.8px;color:#2a2a2a;-webkit-text-stroke:0.22px currentColor;">50</span>
<span class="t" style="left:729.57px;top:492px;font-size:5.9px;color:#a8a8a8;-webkit-text-stroke:0.12px currentColor;">4.19%</span>
<svg class="b " style="left:40px;top:508px;" width="717" height="31" viewBox="40 508 717 31"><rect x="41.40" y="509.40" width="714.10" height="28.50" rx="0.00" fill="#f8f8f8"/></svg>
<svg class="b " style="left:40px;top:508px;" width="717" height="3" viewBox="40 508 717 3"><rect x="41.40" y="509.00" width="714.10" height="0.80" rx="0.00" fill="#e9e9e9"/></svg>
<span class="t" style="left:49.10px;top:515px;font-size:7.8px;color:#2a2a2a;-webkit-text-stroke:0.12px currentColor;letter-spacing:0.074px;">piwik.clientc.com</span>
<span class="t" style="left:438.39px;top:511px;font-size:7.8px;color:#2a2a2a;-webkit-text-stroke:0.22px currentColor;">436</span>
<span class="t" style="left:434.97px;top:520px;font-size:5.9px;color:#a8a8a8;-webkit-text-stroke:0.12px currentColor;">3.72%</span>
<span class="t" style="left:517.00px;top:514px;font-size:7.8px;color:#2a2a2a;-webkit-text-stroke:0.12px currentColor;letter-spacing:-0.200px;">11m 4s</span>
<span class="t" style="left:641.20px;top:514px;font-size:7.8px;color:#2a2a2a;-webkit-text-stroke:0.12px currentColor;letter-spacing:0.006px;">5.93</span>
<span class="t" style="left:737.42px;top:511px;font-size:7.8px;color:#2a2a2a;-webkit-text-stroke:0.22px currentColor;">19</span>
<span class="t" style="left:729.57px;top:520px;font-size:5.9px;color:#a8a8a8;-webkit-text-stroke:0.12px currentColor;">1.59%</span>
<svg class="b " style="left:40px;top:536px;" width="717" height="31" viewBox="40 536 717 31"><rect x="41.40" y="537.90" width="714.10" height="28.10" rx="0.00" fill="#fff"/></svg>
<svg class="b " style="left:40px;top:536px;" width="717" height="4" viewBox="40 536 717 4"><rect x="41.40" y="537.50" width="714.10" height="0.80" rx="0.00" fill="#e9e9e9"/></svg>
</article>
</main>
</div>
<svg class="b win" style="left:0;top:0" width="768" height="546" viewBox="0 0 768 546"><path d="M0 0H768V546H0z M0 4a4 4 0 0 1 4-4h760a4 4 0 0 1 4 4v539.500a2.500 2.500 0 0 1-2.500 2.500h-763a2.500 2.500 0 0 1-2.500-2.500z" fill="#fff" fill-rule="evenodd"/><path d="M0 4a4 4 0 0 1 4-4h760a4 4 0 0 1 4 4v539.500a2.500 2.500 0 0 1-2.500 2.500h-763a2.500 2.500 0 0 1-2.500-2.500z M1.45 14.9H766.3V543.4a1.200 1.200 0 0 1-1.200 1.200H2.65a1.200 1.200 0 0 1-1.200-1.200z" fill="#3c3c3c" fill-rule="evenodd"/><path d="M1 14.9V4a3 3 0 0 1 3-3H763.500a3 3 0 0 1 3 3V14.9z" fill="#0e1114"/><circle cx="7.9" cy="7.700" r="3.200" fill="#fff"/><circle cx="17.6" cy="7.700" r="3.200" fill="#fff"/><circle cx="27.4" cy="7.700" r="3.200" fill="#fff"/></svg>
</body>
</html>
